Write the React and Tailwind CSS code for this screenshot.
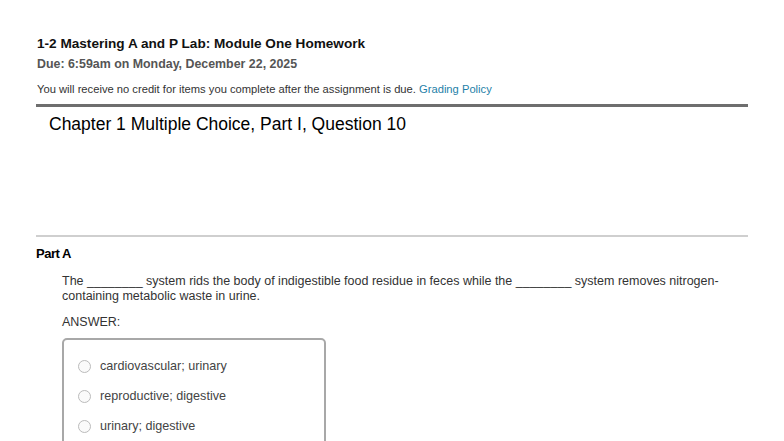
export default function App() {
  const f = { fontFamily: '"Liberation Sans", Arial, sans-serif' };
  const options = ["cardiovascular; urinary", "reproductive; digestive", "urinary; digestive"];
  return (
    <div className="w-[784px] h-[441px] overflow-hidden bg-white" style={f}>
      <div className="ml-[36px] w-[712px] pt-[36px]">
        <div className="text-[13.6px] font-bold text-[#111] leading-[16px] pl-[1px]">1-2 Mastering A and P Lab: Module One Homework</div>
        <div className="mt-[4px] text-[12.4px] font-bold text-[#555] leading-[16px] pl-[1px]">Due: 6:59am on Monday, December 22, 2025</div>
        <div className="mt-[10px] text-[11.2px] text-[#333] leading-[14px] pl-[1px]">
          You will receive no credit for items you complete after the assignment is due. <span className="text-[#1f7fa8]">Grading Policy</span>
        </div>
        <div className="mt-[8px] h-[3px] bg-[#6e6e6e]" />
        <div className="pl-[13px] pt-[6px] text-[17.5px] text-black leading-[22px]">Chapter 1 Multiple Choice, Part I, Question 10</div>
        <div className="mt-[100px] h-[2px] bg-[#cfcfcf]" />
        <div className="mt-[9px] text-[13px] font-bold text-black leading-[16px] tracking-[-0.5px]">Part A</div>
        <div className="pl-[26px] pt-[12px] text-[12.5px] text-[#333] leading-[15px] w-[690px]">
          The ________ system rids the body of indigestible food residue in feces while the ________ system removes nitrogen-containing metabolic waste in urine.
        </div>
        <div className="pl-[26px] mt-[11px] text-[12.5px] text-[#333] leading-[15px]">ANSWER:</div>
        <div className="ml-[26px] mt-[8px] w-[264px] h-[140px] border-2 border-[#a8a8a8] rounded-[5px] pt-[11px] pl-[14px]">
          {options.map((o) => (
            <div key={o} className="flex items-center h-[30px]">
              <span className="w-[13px] h-[13px] rounded-full border border-[#bbb] bg-[#fafafa] mr-[9px]" />
              <span className="text-[12.6px] text-[#444]">{o}</span>
            </div>
          ))}
        </div>
      </div>
    </div>
  );
}
